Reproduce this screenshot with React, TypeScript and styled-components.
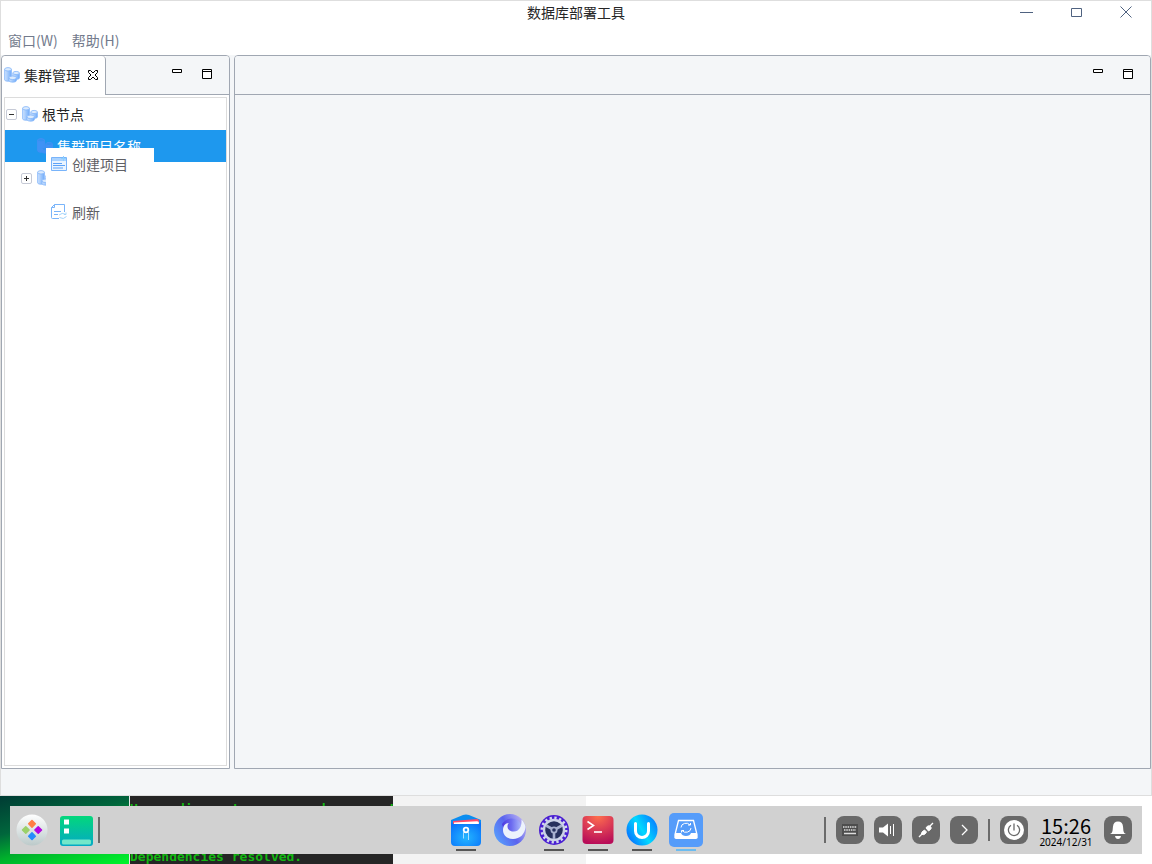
import React from 'react';
import styled, { createGlobalStyle, css } from 'styled-components';

const UI_FONT = '"Noto Sans", "Noto Sans CJK SC", sans-serif';
const CJK_FONT = '"Noto Sans CJK SC", sans-serif';
const MONO_FONT = '"DejaVu Sans Mono", monospace';

const LINE = '#a0a7b2';
const PANEL = '#f4f6f8';

const GlobalStyle = createGlobalStyle`
  * {
    box-sizing: border-box;
  }
  body {
    margin: 0;
    background: #fff;
    font-family: ${CJK_FONT};
    font-size: 14px;
    line-height: 20px;
  }
`;

const mixinButtonReset = css`
  display: inline-flex;
  align-items: center;
  justify-content: center;
  margin: 0;
  padding: 0;
  border: 0;
  background: transparent;
  color: inherit;
  font: inherit;
`;

const ScDesktop = styled.div`
  display: flex;
  flex-direction: column;
  height: 100vh;
  overflow: hidden;
`;

/* application window */
const ScWindow = styled.main`
  flex: 1;
  min-height: 0;
  display: flex;
  flex-direction: column;
  border: 1px solid #dedede;
  background: ${PANEL};
`;
const ScTitleBar = styled.header`
  display: grid;
  grid-template-columns: 1fr auto 1fr;
  height: 26px;
  background: #fff;
`;
const ScTitle = styled.h1`
  grid-column: 2;
  margin: 0;
  padding-top: 1px;
  color: #262626;
  font-size: 14px;
  font-weight: 400;
  line-height: 20px;
`;
const ScWindowButtons = styled.div`
  display: flex;
  align-items: flex-start;
  justify-content: flex-end;
`;
const ScWindowButton = styled.button`
  ${mixinButtonReset};
  width: 50px;
  height: 22px;
`;
const ScMenuBar = styled.nav`
  display: flex;
  align-items: flex-start;
  gap: 14px;
  height: 28px;
  padding: 3px 7px;
  background: #fff;
`;
const ScMenuButton = styled.button`
  ${mixinButtonReset};
  color: #727a8c;
  line-height: 20px;
`;
const ScWorkbench = styled.div`
  flex: 1;
  min-height: 0;
  display: flex;
  gap: 4px;
`;
const ScPane = styled.section<{ $side?: boolean }>`
  display: flex;
  flex-direction: column;
  flex: ${p => (p.$side ? '0 0 229px' : '1')};
  overflow: hidden;
  border: 1px solid ${LINE};
  border-radius: 4px 4px 0 0;
  background: ${p => (p.$side ? '#fff' : PANEL)};
`;
const ScPaneHeader = styled.div`
  display: flex;
  height: 39px;
`;
const ScTab = styled.div`
  display: flex;
  align-items: center;
  width: 104px;
  padding: 0 5px 2px 2px;
  border-right: 1px solid ${LINE};
  border-radius: 4px 4px 0 0;
  background: #fff;
  color: #262626;
`;
const ScTabLabel = styled.span`
  flex: 1;
  margin-left: 4px;
`;
const ScTabClose = styled.button`
  ${mixinButtonReset};
  width: 14px;
  height: 14px;
`;
const ScPaneTools = styled.div`
  flex: 1;
  display: flex;
  justify-content: flex-end;
  gap: 14px;
  padding: 10px 14px 0 0;
  border-bottom: 1px solid ${LINE};
  background: ${PANEL};
`;
const ScPaneTool = styled.button`
  ${mixinButtonReset};
  width: 16px;
  height: 16px;
`;
const ScTree = styled.ul`
  position: relative;
  flex: 1;
  margin: 2px;
  padding: 0;
  border: 1px solid #dcdcdc;
  list-style: none;
`;
const ScTreeRow = styled.li<{ $level: number; $selected?: boolean }>`
  display: flex;
  align-items: center;
  height: 32px;
  padding-left: ${p => 1 + p.$level * 15}px;
  background: ${p => (p.$selected ? '#1e98ee' : 'transparent')};
  color: ${p => (p.$selected ? '#fff' : '#262626')};
`;
const ScTreeLabel = styled.span`
  margin-left: 4px;
`;
const ScTwisty = styled.button<{ $hidden?: boolean }>`
  ${mixinButtonReset};
  width: 11px;
  height: 11px;
  margin-right: 5px;
  border: 1px solid #c6cad6;
  border-radius: 2px;
  background: #fff;
  visibility: ${p => (p.$hidden ? 'hidden' : 'visible')};
`;
const ScContextMenu = styled.div`
  position: absolute;
  top: 50px;
  left: 41px;
  display: flex;
  flex-direction: column;
  gap: 16px;
  width: 108px;
  padding-bottom: 14px;
  background: #fff;
`;
const ScContextItem = styled.button`
  ${mixinButtonReset};
  justify-content: flex-start;
  gap: 4px;
  height: 32px;
  padding-left: 4px;
  color: #5f6066;
`;
const ScStatusBar = styled.footer`
  height: 26px;
`;

/* desktop strip behind the dock */
const ScBackdrop = styled.div`
  position: relative;
  display: flex;
  height: 68px;
`;
const ScWallpaper = styled.div`
  width: 129px;
  background: linear-gradient(165deg, #003b34 0%, #00663c 38%, #00b02c 62%, #00f52c 100%);
`;
const ScTerminal = styled.pre`
  display: flex;
  flex-direction: column;
  justify-content: space-between;
  width: 264px;
  margin: 0;
  padding-top: 6px;
  overflow: hidden;
  border-left: 1px solid #e8e8e8;
  background: #252525;
  color: #12b812;
  font: bold 13px/14px ${MONO_FONT};
`;
const ScPage = styled.div`
  width: 193px;
  background: #f3f3f3;
`;
const ScDock = styled.div`
  position: absolute;
  top: 10px;
  right: 10px;
  left: 10px;
  display: grid;
  grid-template-columns: 1fr auto 1fr;
  align-items: center;
  height: 48px;
  background: #d1d1d1;
`;
const ScDockGroup = styled.div<{ $end?: boolean }>`
  display: flex;
  align-items: center;
  justify-content: ${p => (p.$end ? 'flex-end' : 'flex-start')};
  gap: ${p => (p.$end ? 10 : 5)}px;
  padding: ${p => (p.$end ? '0 10px 0 0' : '0 0 0 5px')};
`;
const ScLaunchers = styled.div`
  display: flex;
  gap: 10px;
`;
const ScLauncher = styled.button<{ $mark?: string }>`
  ${mixinButtonReset};
  flex-direction: column;
  justify-content: flex-start;
  gap: 2px;
  width: 34px;
  height: 48px;
  padding-top: 7px;

  &::after {
    content: '';
    width: 20px;
    height: 2px;
    background: ${p => p.$mark || 'transparent'};
  }
`;
const ScDivider = styled.i<{ $short?: boolean }>`
  width: 2px;
  height: ${p => (p.$short ? 22 : 26)}px;
  background: #6b6b6b;
`;
const ScTrayButton = styled.button`
  ${mixinButtonReset};
  width: 28px;
  height: 28px;
  border-radius: 8px;
  background: #696969;
`;
const ScClock = styled.time`
  display: flex;
  flex-direction: column;
  width: 56px;
  padding-top: 4px;
  color: #000;
  font-family: ${UI_FONT};
  font-size: 10px;
  line-height: 12px;
  text-align: center;
`;
const ScClockTime = styled.span`
  font-family: ${CJK_FONT};
  font-size: 20px;
  line-height: 20px;
`;
const ScTray = styled.div`
  display: flex;
  gap: 10px;
`;

function DatabaseIcon({ dim }: { dim?: boolean }): React.JSX.Element {
  const edge = dim ? '#4790f5' : '#84b6fa';
  const side = dim ? '#3f93f6' : 'url(#db)';
  const top = dim ? '#3492f1' : '#dcebfd';
  return <svg width="16" height="16" viewBox="0 0 16 16" stroke={edge} strokeWidth=".8">
    <defs>
      <linearGradient id="db">
        <stop stopColor="#cfe3fe" /><stop offset="1" stopColor="#72adfa" />
      </linearGradient>
    </defs>
    <path d="M.6 2.300v10.400c0 2 6.800 2 6.800 0V2.300" fill={side} />
    <ellipse cx="4" cy="2.300" rx="3.400" ry="1.700" fill={top} />
    <path d="M8.800 6.200V11c0 1.800 6.600 1.800 6.600 0V6.200" fill={side} />
    <ellipse cx="12.100" cy="6" rx="3.300" ry="1.600" fill={top} />
    <path d="M5 10.800v2.700c0 2.200 7.400 2.200 7.400 0v-2.700" fill={side} />
    <ellipse cx="8.700" cy="10.800" rx="3.700" ry="1.800" fill={top} />
  </svg>;
}

function PaneTools(): React.JSX.Element {
  return <ScPaneTools>
    <ScPaneTool aria-label="最小化">
      <svg width="16" height="16" fill="#fff" stroke="#000"><path d="M3.500 3.500h9v3h-9z" /></svg>
    </ScPaneTool>
    <ScPaneTool aria-label="最大化">
      <svg width="16" height="16" fill="#fff" stroke="#000"><path d="M3.500 3.500h9v9h-9zM3.500 5.500h9" /></svg>
    </ScPaneTool>
  </ScPaneTools>;
}

function Launchers(): React.JSX.Element {
  return <ScLaunchers>
    <ScLauncher $mark="#555" aria-label="文件管理器">
      <svg width="34" height="34" viewBox="0 0 34 34">
        <defs>
          <radialGradient id="files" cx=".5" cy=".65" r=".7">
            <stop stopColor="#24b6ff" /><stop offset="1" stopColor="#0871fb" />
          </radialGradient>
        </defs>
        <path d="M2 7 14 2q3-1 6 0l12 5v9H2z" fill="#0b8df0" />
        <path d="m4 8 24-2q2 0 2 3v2H4z" fill="#ff4a68" />
        <path d="m5 9.500 23-1.300q2 0 2 2v1H5z" fill="#fff" />
        <path d="M2 9q1 2 3 2h24q2 0 3-2v20q0 4-4 4H6q-4 0-4-4z" fill="url(#files)" />
        <circle cx="17" cy="17" r="2.300" fill="none" stroke="#fff" strokeWidth="1.800" />
        <path d="M14.500 18.500v7M19.500 18.500v8.500" stroke="#a9e0ff" />
      </svg>
    </ScLauncher>
    <ScLauncher aria-label="浏览器">
      <svg width="34" height="34" viewBox="0 0 34 34">
        <defs>
          <linearGradient id="swirl" x1="0" y1=".8" x2="1" y2=".2">
            <stop stopColor="#57a3fd" /><stop offset=".5" stopColor="#5a63ee" /><stop offset="1" stopColor="#c3b8f3" />
          </linearGradient>
          <linearGradient id="swirlInner" x1="0" x2="1">
            <stop stopColor="#4a37e0" /><stop offset=".5" stopColor="#6d6cf0" /><stop offset="1" stopColor="#a9b6fb" />
          </linearGradient>
        </defs>
        <circle cx="17" cy="17" r="16" fill="url(#swirl)" />
        <path d="M9 11q5-7 13-5 5 2 6 6-2 8-9 8-8 0-10-9z" fill="url(#swirlInner)" />
        <path d="M16 10c-4 0-6 3-6 7 0 5 4 9 10 9 7 0 12-5 12.500-12-.5-3-2-5.500-4-7.500.5 6-2 12-7.500 12-4 0-6.500-2-6.500-5 0-2 .5-3 1.500-3.500z" fill="#edf3fc" />
      </svg>
    </ScLauncher>
    <ScLauncher $mark="#555" aria-label="控制中心">
      <svg width="34" height="34" viewBox="0 0 34 34">
        <circle cx="17" cy="17" r="15" fill="#4a1fd2" />
        <circle cx="17" cy="17" r="12.200" fill="none" stroke="#d3d9ec" strokeWidth="2.600" strokeDasharray="2.300 2.491" />
        <circle cx="17" cy="17" r="10" fill="#26305e" stroke="#ccd3e8" strokeWidth="2.400" />
        <path d="M17 17V26M17 17l-8-4.500M17 17l8-4.500" stroke="#a7b0d0" strokeWidth="2.600" />
        <circle cx="17" cy="17" r="3.500" fill="#a7b0d0" />
        <circle cx="17" cy="17" r="1.800" fill="#26305e" />
      </svg>
    </ScLauncher>
    <ScLauncher $mark="#555" aria-label="终端">
      <svg width="34" height="34" viewBox="0 0 34 34">
        <defs>
          <radialGradient id="term" cx=".5" cy="0" r="1">
            <stop stopColor="#ff704d" /><stop offset=".5" stopColor="#dc3c55" /><stop offset="1" stopColor="#b80d58" />
          </radialGradient>
        </defs>
        <rect x="1.500" y="3" width="31" height="28" rx="4" fill="url(#term)" />
        <path d="m6.500 8.500 6 4-6 4" fill="none" stroke="#fff" strokeWidth="1.600" />
        <path d="M13 19h8" stroke="#fff" strokeWidth="1.600" />
      </svg>
    </ScLauncher>
    <ScLauncher $mark="#555" aria-label="系统助手">
      <svg width="34" height="34" viewBox="0 0 34 34">
        <defs>
          <linearGradient id="uos" y1=".8" x2="1" y2=".2">
            <stop stopColor="#0869ff" /><stop offset=".5" stopColor="#00d9ff" /><stop offset="1" stopColor="#0877ff" />
          </linearGradient>
        </defs>
        <circle cx="17" cy="17" r="15.500" fill="url(#uos)" />
        <path d="M10.500 10.500v7.500a6.500 6.500 0 0 0 13 0v-7.500" fill="none" stroke="#fff" strokeWidth="3" strokeLinecap="round" />
      </svg>
    </ScLauncher>
    <ScLauncher $mark="#6bbcf0" aria-label="数据库部署工具">
      <svg width="34" height="34" viewBox="0 0 34 34" fill="none" stroke="#fff">
        <rect width="34" height="34" rx="5" fill="#559cfa" stroke="none" />
        <path d="M9.500 7.500h15l3.500 14v3H6v-3z" strokeWidth="1.300" />
        <path d="M6 20h6q1 3 5 3t5-3h6v5q0 1-1 1H7q-1 0-1-1z" fill="#fff" stroke="none" />
        <path d="M12 14.500a5 4.500 0 0 1 9-2.500m1 3a5 4.500 0 0 1-9 2.500M21.500 10v2H19M12.500 19.500v-2H15" />
      </svg>
    </ScLauncher>
  </ScLaunchers>;
}

function Dock(): React.JSX.Element {
  return <ScDock>
    <ScDockGroup>
      <ScLaunchers>
        <ScLauncher aria-label="启动器">
          <svg width="34" height="34" viewBox="0 0 34 34">
            <defs>
              <linearGradient id="start" x2="0" y2="1"><stop stopColor="#fff" /><stop offset="1" stopColor="#bccaca" /></linearGradient>
            </defs>
            <circle cx="17" cy="17" r="15.500" fill="url(#start)" />
            <g strokeWidth="1.500" strokeLinejoin="round">
              <path d="m17 7.500 3.300 3.300-3.300 3.300-3.300-3.300z" fill="#ff7f45" stroke="#ff7f45" />
              <path d="m10.800 13.700 3.300 3.300-3.300 3.300L7.500 17z" fill="#9bd169" stroke="#9bd169" />
              <path d="m23.200 13.700 3.300 3.300-3.300 3.300-3.300-3.300z" fill="#b405df" stroke="#b405df" />
              <path d="m17 19.900 3.300 3.300-3.300 3.300-3.300-3.300z" fill="#258bfb" stroke="#258bfb" />
            </g>
          </svg>
        </ScLauncher>
        <ScLauncher aria-label="多任务视图">
          <svg width="34" height="34" viewBox="0 0 34 34">
            <defs>
              <linearGradient id="tasks" x2="0" y2="1"><stop stopColor="#03d77b" /><stop offset="1" stopColor="#05a9c5" /></linearGradient>
            </defs>
            <rect x="1" y="3" width="33" height="30" rx="3" fill="url(#tasks)" />
            <path d="M5 6.500h5v5H5zM5 15.500h5v5H5z" fill="#fff" />
            <rect x="3" y="26.500" width="29" height="5" rx="1.500" fill="#73e7ca" />
          </svg>
        </ScLauncher>
      </ScLaunchers>
      <ScDivider />
    </ScDockGroup>
    <Launchers />
    <ScDockGroup $end>
      <ScDivider />
      <ScTray>
        <ScTrayButton aria-label="键盘">
          <svg width="28" height="28" viewBox="0 0 28 28">
            <path d="M6 8h16v12H6z" fill="#4d4d4d" />
            <path d="M7 11h14M8 14h12" stroke="#e0e0e0" strokeWidth="1.500" strokeDasharray="1.500 .8" />
            <path d="M8 17.500h12" stroke="#ddd" strokeWidth="1.500" />
          </svg>
        </ScTrayButton>
        <ScTrayButton aria-label="音量">
          <svg width="28" height="28" viewBox="0 0 28 28">
            <path d="M5 11.500h4l5-4v13l-5-4H5z" fill="#fff" />
            <path d="M16.500 10v8M19.500 8v12" stroke="#fff" />
          </svg>
        </ScTrayButton>
        <ScTrayButton aria-label="网络">
          <svg width="28" height="28" viewBox="0 0 28 28" stroke="#fff" fill="#fff">
            <path d="m7 21 5-5M16 12l5-5" strokeWidth="1.400" />
            <path d="m10 16 2.500-2 2 2L13 18q-2 1.500-3.500 0zM14 12l1-1.500q2-1.500 3.500 0t0 3L16.500 15z" />
          </svg>
        </ScTrayButton>
        <ScTrayButton aria-label="展开">
          <svg width="28" height="28" fill="none" stroke="#fff" strokeWidth="1.300"><path d="m12 9 5 5-5 5" /></svg>
        </ScTrayButton>
      </ScTray>
      <ScDivider $short />
      <ScTrayButton aria-label="电源">
        <svg width="28" height="28" fill="none" stroke="#696969" strokeWidth="1.300">
          <circle cx="14" cy="14" r="10" fill="#fff" stroke="none" />
          <path d="M11 9.200a5.600 5.600 0 1 0 6 0M14 7.500v7" />
        </svg>
      </ScTrayButton>
      <ScClock dateTime="2024-12-31T15:26">
        <ScClockTime>15:26</ScClockTime>
        <span>2024/12/31</span>
      </ScClock>
      <ScTrayButton aria-label="通知">
        <svg width="28" height="28" fill="#fff">
          <path d="M6 18c3-1 2.500-4 3-7.500q.5-5 5-5t5 5c.5 3.500 0 6.500 3 7.500zM11 20h6q-.5 3-3 3t-3-3z" />
        </svg>
      </ScTrayButton>
    </ScDockGroup>
  </ScDock>;
}

export default function App(): React.JSX.Element {
  return <ScDesktop>
    <GlobalStyle />
    <ScWindow>
      <ScTitleBar>
        <ScTitle>数据库部署工具</ScTitle>
        <ScWindowButtons>
          <ScWindowButton aria-label="最小化窗口">
            <svg width="14" height="14" stroke="#4f6280"><path d="M1 7.500h13" /></svg>
          </ScWindowButton>
          <ScWindowButton aria-label="最大化窗口">
            <svg width="12" height="12" stroke="#4f6280" fill="none"><path d="M1.500 2.500h10v8h-10z" /></svg>
          </ScWindowButton>
          <ScWindowButton aria-label="关闭窗口">
            <svg width="12" height="12" stroke="#4f6280"><path d="m.5.5 11 11M11.500.5l-11 11" /></svg>
          </ScWindowButton>
        </ScWindowButtons>
      </ScTitleBar>
      <ScMenuBar>
        <ScMenuButton>窗口(W)</ScMenuButton>
        <ScMenuButton>帮助(H)</ScMenuButton>
      </ScMenuBar>
      <ScWorkbench>
        <ScPane $side>
          <ScPaneHeader>
            <ScTab>
              <DatabaseIcon />
              <ScTabLabel>集群管理</ScTabLabel>
              <ScTabClose aria-label="关闭">
                <svg width="12" height="12" fill="#fff" stroke="#000">
                  <path d="M1.500 1.500h2L6 4l2.500-2.500h2v2L8 6l2.500 2.500v2h-2L6 8l-2.500 2.500h-2v-2L4 6 1.500 3.500z" />
                </svg>
              </ScTabClose>
            </ScTab>
            <PaneTools />
          </ScPaneHeader>
          <ScTree>
            <ScTreeRow $level={0}>
              <ScTwisty aria-label="折叠"><svg width="9" height="9" stroke="#333"><path d="M2 4.500h5" /></svg></ScTwisty>
              <DatabaseIcon />
              <ScTreeLabel>根节点</ScTreeLabel>
            </ScTreeRow>
            <ScTreeRow $level={1} $selected>
              <ScTwisty $hidden tabIndex={-1} />
              <DatabaseIcon dim />
              <ScTreeLabel>集群项目名称</ScTreeLabel>
            </ScTreeRow>
            <ScTreeRow $level={1}>
              <ScTwisty aria-label="展开"><svg width="9" height="9" stroke="#333"><path d="M2 4.500h5M4.500 2v5" /></svg></ScTwisty>
              <DatabaseIcon />
            </ScTreeRow>
            <ScContextMenu>
              <ScContextItem>
                <svg width="18" height="18" viewBox="0 0 18 18" fill="none" stroke="#79b4fa">
                  <path d="M1.500 2.500h15v13h-15z" fill="#eaf4ff" />
                  <path d="M2 3h14v3H2z" fill="#a9d2ff" stroke="none" />
                  <path d="M3 8.500h9M3 10.500h12M3 13h10" stroke="#5da3f8" />
                  <path d="M13.500 1v5M11 3.500h5" stroke="#8ccfff" />
                </svg>
                创建项目
              </ScContextItem>
              <ScContextItem>
                <svg width="18" height="18" viewBox="0 0 18 18" fill="none" stroke="#79b4fa">
                  <path d="M4.500 1.500h10V9M4.500 1.500l-3 3v10q0 1 1 1H9M1.500 4.500h3v-3M4 8.500h7M4 11.500h4" />
                  <path d="M9 12q3-3 7-.5M16.500 13.500q-3 3.500-7 1M16 9.500v2h-2" stroke="#a5d4fa" />
                </svg>
                刷新
              </ScContextItem>
            </ScContextMenu>
          </ScTree>
        </ScPane>
        <ScPane>
          <ScPaneHeader>
            <PaneTools />
          </ScPaneHeader>
        </ScPane>
      </ScWorkbench>
      <ScStatusBar />
    </ScWindow>
    <ScBackdrop>
      <ScWallpaper />
      <ScTerminal>
        <span>Uos medium set on one node as root</span>
        <span>Dependencies resolved.</span>
      </ScTerminal>
      <ScPage />
      <Dock />
    </ScBackdrop>
  </ScDesktop>;
}
